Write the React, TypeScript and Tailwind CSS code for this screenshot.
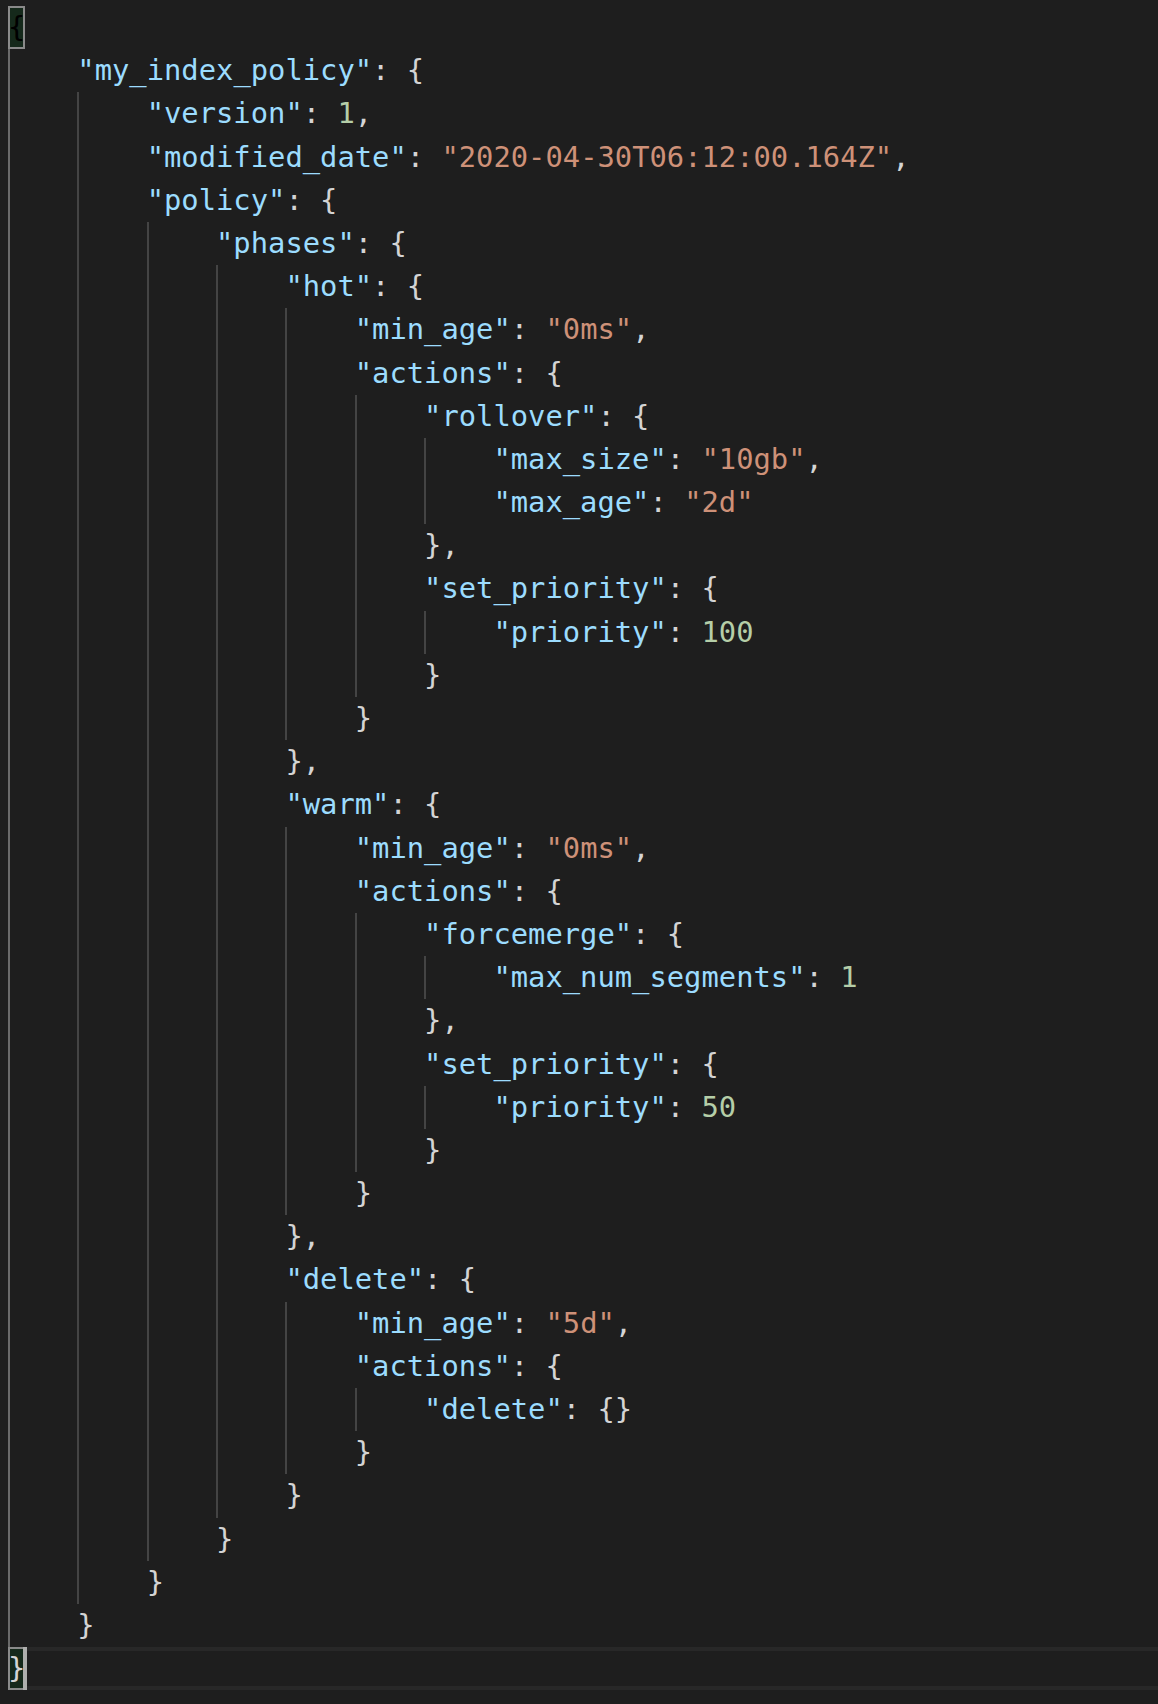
import React from 'react';

type Tok = { t: 'k' | 's' | 'n' | 'p'; v: string };
type Line = { indent: number; toks: Tok[] };

const k = (v: string): Tok => ({ t: 'k', v: `"${v}"` });
const s = (v: string): Tok => ({ t: 's', v: `"${v}"` });
const n = (v: string): Tok => ({ t: 'n', v });
const p = (v: string): Tok => ({ t: 'p', v });

const lines: Line[] = [
  { indent: 0, toks: [p('{')] },
  { indent: 1, toks: [k('my_index_policy'), p(': {')] },
  { indent: 2, toks: [k('version'), p(': '), n('1'), p(',')] },
  { indent: 2, toks: [k('modified_date'), p(': '), s('2020-04-30T06:12:00.164Z'), p(',')] },
  { indent: 2, toks: [k('policy'), p(': {')] },
  { indent: 3, toks: [k('phases'), p(': {')] },
  { indent: 4, toks: [k('hot'), p(': {')] },
  { indent: 5, toks: [k('min_age'), p(': '), s('0ms'), p(',')] },
  { indent: 5, toks: [k('actions'), p(': {')] },
  { indent: 6, toks: [k('rollover'), p(': {')] },
  { indent: 7, toks: [k('max_size'), p(': '), s('10gb'), p(',')] },
  { indent: 7, toks: [k('max_age'), p(': '), s('2d')] },
  { indent: 6, toks: [p('},')] },
  { indent: 6, toks: [k('set_priority'), p(': {')] },
  { indent: 7, toks: [k('priority'), p(': '), n('100')] },
  { indent: 6, toks: [p('}')] },
  { indent: 5, toks: [p('}')] },
  { indent: 4, toks: [p('},')] },
  { indent: 4, toks: [k('warm'), p(': {')] },
  { indent: 5, toks: [k('min_age'), p(': '), s('0ms'), p(',')] },
  { indent: 5, toks: [k('actions'), p(': {')] },
  { indent: 6, toks: [k('forcemerge'), p(': {')] },
  { indent: 7, toks: [k('max_num_segments'), p(': '), n('1')] },
  { indent: 6, toks: [p('},')] },
  { indent: 6, toks: [k('set_priority'), p(': {')] },
  { indent: 7, toks: [k('priority'), p(': '), n('50')] },
  { indent: 6, toks: [p('}')] },
  { indent: 5, toks: [p('}')] },
  { indent: 4, toks: [p('},')] },
  { indent: 4, toks: [k('delete'), p(': {')] },
  { indent: 5, toks: [k('min_age'), p(': '), s('5d'), p(',')] },
  { indent: 5, toks: [k('actions'), p(': {')] },
  { indent: 6, toks: [k('delete'), p(': {}')] },
  { indent: 5, toks: [p('}')] },
  { indent: 4, toks: [p('}')] },
  { indent: 3, toks: [p('}')] },
  { indent: 2, toks: [p('}')] },
  { indent: 1, toks: [p('}')] },
  { indent: 0, toks: [p('}')] },
];

const colors: Record<Tok['t'], string> = {
  k: 'text-[#9cdcfe]',
  s: 'text-[#ce9178]',
  n: 'text-[#b5cea8]',
  p: 'text-[#d4d4d4]',
};

const BracketBox = ({ ch }: { ch: string }) => (
  <span className="inline-flex h-full w-[1ch] items-center bg-[#15291b] shadow-[inset_0_0_0_2px_#8a8a8a]">
    {ch}
  </span>
);

export default function App() {
  const last = lines.length - 1;
  return (
    <div className="min-h-screen bg-[#1e1e1e] pt-[6px] font-['DejaVu_Sans_Mono',monospace] text-[28.8px] leading-[43.2px]">
      {lines.map((line, i) => (
        <div
          key={i}
          className={
            i === last
              ? 'ml-2 flex h-[43.2px] items-center whitespace-pre text-[#d4d4d4] shadow-[inset_0_4px_0_#282828,inset_0_-4px_0_#282828]'
              : 'ml-2 flex h-[43.2px] items-center whitespace-pre'
          }
        >
          {/* indent guides */}
          {Array.from({ length: line.indent }).map((_, g) => (
            <span
              key={g}
              className={
                g === 0
                  ? 'h-full w-[4ch] shrink-0 border-l-2 border-[#6a6a6a]'
                  : 'h-full w-[4ch] shrink-0 border-l-2 border-[#444444]'
              }
            />
          ))}
          {i === 0 || i === last ? (
            <>
              <BracketBox ch={line.toks[0].v} />
              {i === last && <span className="-ml-[2px] h-full w-[4px] bg-[#aeafad]" />}
            </>
          ) : (
            line.toks.map((t, j) => (
              <span key={j} className={colors[t.t]}>
                {t.v}
              </span>
            ))
          )}
        </div>
      ))}
    </div>
  );
}
